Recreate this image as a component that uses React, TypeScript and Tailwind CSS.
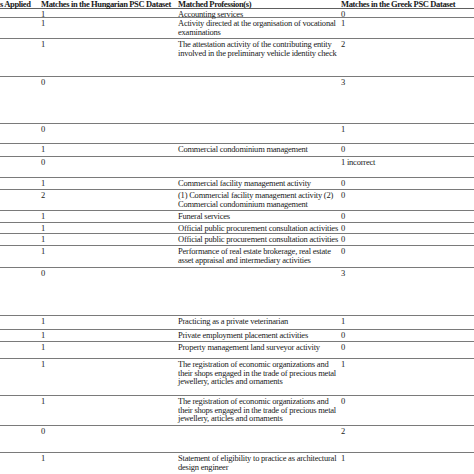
import React from 'react';

type Row = {
  h: string;
  hu: string;
  prof: string[];
  gr: string;
};

const rows: Row[] = [
  { h: 'h-[9px]', hu: '1', prof: ['Accounting services'], gr: '0' },
  { h: 'h-[21px]', hu: '1', prof: ['Activity directed at the organisation of vocational', 'examinations'], gr: '1' },
  {
    h: 'h-[38px]',
    hu: '1',
    prof: ['The attestation activity of the contributing entity', 'involved in the preliminary vehicle identity check'],
    gr: '2',
  },
  { h: 'h-[47px]', hu: '0', prof: [], gr: '3' },
  { h: 'h-[20px]', hu: '0', prof: [], gr: '1' },
  { h: 'h-[13px]', hu: '1', prof: ['Commercial condominium management'], gr: '0' },
  { h: 'h-[21px]', hu: '0', prof: [], gr: '1 incorrect' },
  { h: 'h-[12px]', hu: '1', prof: ['Commercial facility management activity'], gr: '0' },
  {
    h: 'h-[21px]',
    hu: '2',
    prof: ['(1) Commercial facility management activity (2)', 'Commercial condominium management'],
    gr: '0',
  },
  { h: 'h-[12px]', hu: '1', prof: ['Funeral services'], gr: '0' },
  { h: 'h-[11px]', hu: '1', prof: ['Official public procurement consultation activities'], gr: '0' },
  { h: 'h-[12px]', hu: '1', prof: ['Official public procurement consultation activities'], gr: '0' },
  {
    h: 'h-[22px]',
    hu: '1',
    prof: ['Performance of real estate brokerage, real estate', 'asset appraisal and intermediary activities'],
    gr: '0',
  },
  { h: 'h-[48px]', hu: '0', prof: [], gr: '3' },
  { h: 'h-[14px]', hu: '1', prof: ['Practicing as a private veterinarian'], gr: '1' },
  { h: 'h-[12px]', hu: '1', prof: ['Private employment placement activities'], gr: '0' },
  { h: 'h-[17px]', hu: '1', prof: ['Property management land surveyor activity'], gr: '0' },
  {
    h: 'h-[37px]',
    hu: '1',
    prof: [
      'The registration of economic organizations and',
      'their shops engaged in the trade of precious metal',
      'jewellery, articles and ornaments',
    ],
    gr: '1',
  },
  {
    h: 'h-[30px]',
    hu: '1',
    prof: [
      'The registration of economic organizations and',
      'their shops engaged in the trade of precious metal',
      'jewellery, articles and ornaments',
    ],
    gr: '0',
  },
  { h: 'h-[27px]', hu: '0', prof: [], gr: '2' },
  {
    h: 'h-[30px]',
    hu: '1',
    prof: ['Statement of eligibility to practice as architectural', 'design engineer'],
    gr: '1',
  },
];

const grid = 'grid grid-cols-[41px_137px_163px_1fr]';

const App: React.FC = () => {
  return (
    <div
      className="w-[474px] h-[474px] overflow-hidden bg-white text-[#1a1a1a] text-[8.5px] leading-[8.6px] tracking-[-0.22px]"
      style={{ fontFamily: '"Liberation Serif", "Times New Roman", serif' }}
    >
      {/* header */}
      <div className={`${grid} h-[9px] font-bold tracking-[-0.36px] leading-[8px] border-b-[1.5px] border-[#5e5e5e] items-start`}>
        <div className="whitespace-nowrap">s Applied</div>
        <div className="whitespace-nowrap">Matches in the Hungarian PSC Dataset</div>
        <div className="whitespace-nowrap">Matched Profession(s)</div>
        <div className="whitespace-nowrap">Matches in the Greek PSC Dataset</div>
      </div>

      {rows.map((row, i) => (
        <div key={i} className={`${grid} ${row.h} border-b-[1.5px] border-[#7a7a7a] items-start pt-[1px]`}>
          <div />
          <div>{row.hu}</div>
          <div className="whitespace-nowrap">
            {row.prof.map((line, j) => (
              <div key={j}>{line}</div>
            ))}
          </div>
          <div className="whitespace-nowrap">{row.gr}</div>
        </div>
      ))}
    </div>
  );
};

export default App;
